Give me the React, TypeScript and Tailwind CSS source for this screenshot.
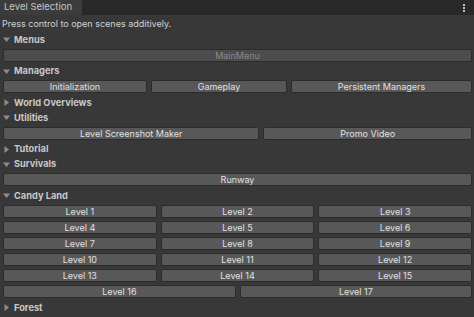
import React from 'react';

function Foldout({ label, open }: { label: string; open: boolean }) {
  return (
    <div className="flex h-[15px] items-center pl-[3px]">
      <svg width="7" height="7" viewBox="0 0 7 7" className="mr-[4px] shrink-0">
        {open ? <path d="M0 1.5 H7 L3.5 6 Z" fill="#8c8c8c" /> : <path d="M1.5 0 V7 L6 3.5 Z" fill="#8c8c8c" />}
      </svg>
      <span className="whitespace-nowrap text-[9.25px] font-bold leading-none text-[#c8c8c8]">{label}</span>
    </div>
  );
}

function Btn({ label, disabled, className = '' }: { label: string; disabled?: boolean; className?: string }) {
  return (
    <div
      className={`flex h-[13px] items-center justify-center whitespace-nowrap rounded-[2px] border border-[#2c2c2c] px-2 text-[9px] leading-none ${
        disabled ? 'bg-[#4c4c4c] text-[#8a8a8a]' : 'bg-[#585858] text-[#e0e0e0]'
      } ${className}`}
    >
      {label}
    </div>
  );
}

function ButtonRow({ labels }: { labels: string[] }) {
  return (
    <div className="flex gap-[4px] py-[1.75px] pl-[3px] pr-[2px]">
      {labels.map((l) => (
        <Btn key={l} label={l} className="grow" />
      ))}
    </div>
  );
}

export default function App() {
  const levels = Array.from({ length: 15 }, (_, i) => `Level ${i + 1}`);

  return (
    <div
      className="h-[317px] w-[474px] overflow-hidden bg-[#383838]"
      style={{ fontFamily: 'Inter, "Liberation Sans", sans-serif' }}
    >
      {/* Tab bar */}
      <div className="flex h-[15px] items-stretch bg-[#282828]">
        <div className="flex w-[82px] items-center whitespace-nowrap bg-[#3c3c3c] pl-[4px] text-[9.5px] text-[#c4c4c4]">
          Level Selection
        </div>
        <div className="flex-1" />
        <div className="flex w-[20px] flex-col items-center justify-center gap-[1px]">
          <div className="h-[2px] w-[2px] bg-[#c4c4c4]" />
          <div className="h-[2px] w-[2px] bg-[#c4c4c4]" />
          <div className="h-[2px] w-[2px] bg-[#c4c4c4]" />
        </div>
      </div>

      <div className="pt-[1px]">
        <div className="flex h-[15px] items-center whitespace-nowrap pl-[2px] text-[9px] text-[#d2d2d2]">
          Press control to open scenes additively.
        </div>

        <div className="pt-[1px]">
          <Foldout label="Menus" open />
          <div className="flex py-[1.75px] pl-[3px] pr-[2px]">
            <Btn label="MainMenu" disabled className="grow" />
          </div>

          <Foldout label="Managers" open />
          <ButtonRow labels={['Initialization', 'Gameplay', 'Persistent Managers']} />

          <Foldout label="World Overviews" open={false} />
          <Foldout label="Utilities" open />
          <ButtonRow labels={['Level Screenshot Maker', 'Promo Video']} />

          <Foldout label="Tutorial" open={false} />
          <Foldout label="Survivals" open />
          <ButtonRow labels={['Runway']} />

          <Foldout label="Candy Land" open />
          <div className="grid grid-cols-3 gap-x-[4px] gap-y-[3px] py-[1.75px] pl-[3px] pr-[2px]">
            {levels.map((l) => (
              <Btn key={l} label={l} />
            ))}
          </div>
          <ButtonRow labels={['Level 16', 'Level 17']} />

          <Foldout label="Forest" open={false} />
        </div>
      </div>
    </div>
  );
}
